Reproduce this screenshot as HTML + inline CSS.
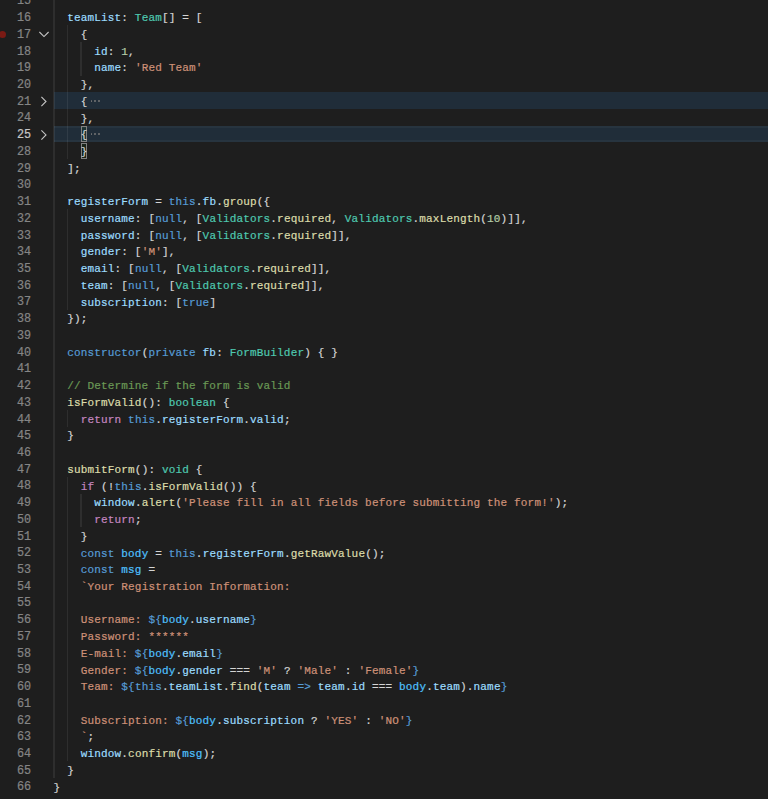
<!DOCTYPE html><html><head><meta charset="utf-8"><style>
html,body{margin:0;padding:0;}
body{width:768px;height:799px;overflow:hidden;background:#1e1e1e;position:relative;font-family:"Liberation Mono",monospace;}
.r{position:absolute;left:53.6px;height:16.725px;line-height:16.725px;white-space:pre;font-size:11px;letter-spacing:0.17px;color:#d4d4d4;-webkit-text-stroke:0.2px currentColor;}
.ln{position:absolute;left:0;width:31px;text-align:right;height:16.725px;line-height:16.725px;font-size:11.75px;letter-spacing:0.0px;color:#858585;-webkit-text-stroke:0.2px currentColor;transform:scaleY(1.08);transform-origin:50% 12.3px;}
.g{position:absolute;width:1px;background:rgba(255,255,255,0.075);}
.fold{position:absolute;left:53.5px;right:0;height:16.725px;background:#202d39;}
.v{color:#9cdcfe}.t{color:#4ec9b0}.s{color:#ce9178}.n{color:#b5cea8}.k{color:#569cd6}.c{color:#c586c0}.f{color:#dcdcaa}.m{color:#6a9955}.o{color:#4fc1ff}.p{color:#d4d4d4}
.bm{outline:1px solid #888;outline-offset:0;background:rgba(0,100,0,0.1);display:inline-block;height:16.725px;vertical-align:top;}
.ell{display:inline-block;width:10.155px;}
svg{position:absolute;}
</style></head><body>
<div class="fold" style="top:92.33px"></div>
<div class="fold" style="top:125.78px"></div>
<div style="position:absolute;left:53.5px;right:0;top:125.78px;height:12.725000000000001px;border-top:2px solid #27343f;border-bottom:2px solid #27343f;"></div>
<div class="g" style="left:53.20px;width:1.7px;top:0.00px;height:778.05px"></div>
<div class="g" style="left:66.74px;width:1.7px;top:25.43px;height:133.80px"></div>
<div class="g" style="left:66.74px;width:1.7px;top:209.40px;height:100.35px"></div>
<div class="g" style="left:66.74px;width:1.7px;top:410.10px;height:16.73px"></div>
<div class="g" style="left:66.74px;width:1.7px;top:477.00px;height:284.33px"></div>
<div class="g" style="left:80.28px;width:1.7px;top:42.15px;height:33.45px"></div>
<div class="g" style="left:80.28px;width:1.7px;top:493.73px;height:33.45px"></div>
<div style="position:absolute;box-sizing:border-box;left:80.68px;top:125.78px;width:6.77px;height:16.73px;border:1px solid #808080;background:rgba(0,100,0,0.1)"></div>
<div style="position:absolute;box-sizing:border-box;left:80.68px;top:142.50px;width:6.77px;height:16.73px;border:1px solid #808080;background:rgba(0,100,0,0.1)"></div>
<div class="ln" style="top:-6.63px;color:#858585">15</div>
<div class="r" style="top:-6.43px"></div>
<div class="ln" style="top:10.10px;color:#858585">16</div>
<div class="r" style="top:10.30px"><span class="p">  </span><span class="v">teamList</span><span class="p">: </span><span class="t">Team</span><span class="p">[] = [</span></div>
<div class="ln" style="top:26.82px;color:#858585">17</div>
<div class="r" style="top:27.03px"><span class="p">    {</span></div>
<div class="ln" style="top:43.55px;color:#858585">18</div>
<div class="r" style="top:43.75px"><span class="p">      </span><span class="v">id</span><span class="p">: </span><span class="n">1</span><span class="p">,</span></div>
<div class="ln" style="top:60.27px;color:#858585">19</div>
<div class="r" style="top:60.48px"><span class="p">      </span><span class="v">name</span><span class="p">: </span><span class="s">&#x27;Red Team&#x27;</span></div>
<div class="ln" style="top:77.00px;color:#858585">20</div>
<div class="r" style="top:77.20px"><span class="p">    },</span></div>
<div class="ln" style="top:93.73px;color:#858585">21</div>
<div class="r" style="top:93.92px"><span class="p">    {</span><span class="ell"></span></div>
<div class="ln" style="top:110.45px;color:#858585">24</div>
<div class="r" style="top:110.65px"><span class="p">    },</span></div>
<div class="ln" style="top:127.18px;color:#c6c6c6">25</div>
<div class="r" style="top:127.38px"><span class="p">    {</span><span class="ell"></span></div>
<div class="ln" style="top:143.90px;color:#858585">28</div>
<div class="r" style="top:144.10px"><span class="p">    }</span></div>
<div class="ln" style="top:160.62px;color:#858585">29</div>
<div class="r" style="top:160.82px"><span class="p">  ];</span></div>
<div class="ln" style="top:177.35px;color:#858585">30</div>
<div class="r" style="top:177.55px"></div>
<div class="ln" style="top:194.08px;color:#858585">31</div>
<div class="r" style="top:194.28px"><span class="p">  </span><span class="v">registerForm</span><span class="p"> = </span><span class="k">this</span><span class="p">.</span><span class="v">fb</span><span class="p">.</span><span class="f">group</span><span class="p">({</span></div>
<div class="ln" style="top:210.80px;color:#858585">32</div>
<div class="r" style="top:211.00px"><span class="p">    </span><span class="v">username</span><span class="p">: [</span><span class="k">null</span><span class="p">, [</span><span class="t">Validators</span><span class="p">.</span><span class="f">required</span><span class="p">, </span><span class="t">Validators</span><span class="p">.</span><span class="f">maxLength</span><span class="p">(</span><span class="n">10</span><span class="p">)]],</span></div>
<div class="ln" style="top:227.53px;color:#858585">33</div>
<div class="r" style="top:227.72px"><span class="p">    </span><span class="v">password</span><span class="p">: [</span><span class="k">null</span><span class="p">, [</span><span class="t">Validators</span><span class="p">.</span><span class="f">required</span><span class="p">]],</span></div>
<div class="ln" style="top:244.25px;color:#858585">34</div>
<div class="r" style="top:244.45px"><span class="p">    </span><span class="v">gender</span><span class="p">: [</span><span class="s">&#x27;M&#x27;</span><span class="p">],</span></div>
<div class="ln" style="top:260.98px;color:#858585">35</div>
<div class="r" style="top:261.18px"><span class="p">    </span><span class="v">email</span><span class="p">: [</span><span class="k">null</span><span class="p">, [</span><span class="t">Validators</span><span class="p">.</span><span class="f">required</span><span class="p">]],</span></div>
<div class="ln" style="top:277.70px;color:#858585">36</div>
<div class="r" style="top:277.90px"><span class="p">    </span><span class="v">team</span><span class="p">: [</span><span class="k">null</span><span class="p">, [</span><span class="t">Validators</span><span class="p">.</span><span class="f">required</span><span class="p">]],</span></div>
<div class="ln" style="top:294.43px;color:#858585">37</div>
<div class="r" style="top:294.63px"><span class="p">    </span><span class="v">subscription</span><span class="p">: [</span><span class="k">true</span><span class="p">]</span></div>
<div class="ln" style="top:311.15px;color:#858585">38</div>
<div class="r" style="top:311.35px"><span class="p">  });</span></div>
<div class="ln" style="top:327.88px;color:#858585">39</div>
<div class="r" style="top:328.08px"></div>
<div class="ln" style="top:344.60px;color:#858585">40</div>
<div class="r" style="top:344.80px"><span class="p">  </span><span class="k">constructor</span><span class="p">(</span><span class="k">private</span><span class="p"> </span><span class="v">fb</span><span class="p">: </span><span class="t">FormBuilder</span><span class="p">) { }</span></div>
<div class="ln" style="top:361.32px;color:#858585">41</div>
<div class="r" style="top:361.53px"></div>
<div class="ln" style="top:378.05px;color:#858585">42</div>
<div class="r" style="top:378.25px"><span class="p">  </span><span class="m">// Determine if the form is valid</span></div>
<div class="ln" style="top:394.77px;color:#858585">43</div>
<div class="r" style="top:394.98px"><span class="p">  </span><span class="f">isFormValid</span><span class="p">(): </span><span class="t">boolean</span><span class="p"> {</span></div>
<div class="ln" style="top:411.50px;color:#858585">44</div>
<div class="r" style="top:411.70px"><span class="p">    </span><span class="c">return</span><span class="p"> </span><span class="k">this</span><span class="p">.</span><span class="v">registerForm</span><span class="p">.</span><span class="v">valid</span><span class="p">;</span></div>
<div class="ln" style="top:428.23px;color:#858585">45</div>
<div class="r" style="top:428.43px"><span class="p">  }</span></div>
<div class="ln" style="top:444.95px;color:#858585">46</div>
<div class="r" style="top:445.15px"></div>
<div class="ln" style="top:461.68px;color:#858585">47</div>
<div class="r" style="top:461.88px"><span class="p">  </span><span class="f">submitForm</span><span class="p">(): </span><span class="t">void</span><span class="p"> {</span></div>
<div class="ln" style="top:478.40px;color:#858585">48</div>
<div class="r" style="top:478.60px"><span class="p">    </span><span class="c">if</span><span class="p"> (!</span><span class="k">this</span><span class="p">.</span><span class="f">isFormValid</span><span class="p">()) {</span></div>
<div class="ln" style="top:495.12px;color:#858585">49</div>
<div class="r" style="top:495.33px"><span class="p">      </span><span class="v">window</span><span class="p">.</span><span class="f">alert</span><span class="p">(</span><span class="s">&#x27;Please fill in all fields before submitting the form!&#x27;</span><span class="p">);</span></div>
<div class="ln" style="top:511.85px;color:#858585">50</div>
<div class="r" style="top:512.05px"><span class="p">      </span><span class="c">return</span><span class="p">;</span></div>
<div class="ln" style="top:528.58px;color:#858585">51</div>
<div class="r" style="top:528.78px"><span class="p">    }</span></div>
<div class="ln" style="top:545.30px;color:#858585">52</div>
<div class="r" style="top:545.50px"><span class="p">    </span><span class="k">const</span><span class="p"> </span><span class="o">body</span><span class="p"> = </span><span class="k">this</span><span class="p">.</span><span class="v">registerForm</span><span class="p">.</span><span class="f">getRawValue</span><span class="p">();</span></div>
<div class="ln" style="top:562.03px;color:#858585">53</div>
<div class="r" style="top:562.23px"><span class="p">    </span><span class="k">const</span><span class="p"> </span><span class="o">msg</span><span class="p"> =</span></div>
<div class="ln" style="top:578.75px;color:#858585">54</div>
<div class="r" style="top:578.95px"><span class="p">    </span><span class="s">`Your Registration Information:</span></div>
<div class="ln" style="top:595.48px;color:#858585">55</div>
<div class="r" style="top:595.68px"></div>
<div class="ln" style="top:612.20px;color:#858585">56</div>
<div class="r" style="top:612.40px"><span class="p">    </span><span class="s">Username: </span><span class="k">${</span><span class="o">body</span><span class="p">.</span><span class="v">username</span><span class="k">}</span></div>
<div class="ln" style="top:628.93px;color:#858585">57</div>
<div class="r" style="top:629.13px"><span class="p">    </span><span class="s">Password: ******</span></div>
<div class="ln" style="top:645.65px;color:#858585">58</div>
<div class="r" style="top:645.85px"><span class="p">    </span><span class="s">E-mail: </span><span class="k">${</span><span class="o">body</span><span class="p">.</span><span class="v">email</span><span class="k">}</span></div>
<div class="ln" style="top:662.38px;color:#858585">59</div>
<div class="r" style="top:662.58px"><span class="p">    </span><span class="s">Gender: </span><span class="k">${</span><span class="o">body</span><span class="p">.</span><span class="v">gender</span><span class="p"> === </span><span class="s">&#x27;M&#x27;</span><span class="p"> ? </span><span class="s">&#x27;Male&#x27;</span><span class="p"> : </span><span class="s">&#x27;Female&#x27;</span><span class="k">}</span></div>
<div class="ln" style="top:679.10px;color:#858585">60</div>
<div class="r" style="top:679.30px"><span class="p">    </span><span class="s">Team: </span><span class="k">${</span><span class="k">this</span><span class="p">.</span><span class="v">teamList</span><span class="p">.</span><span class="f">find</span><span class="p">(</span><span class="v">team</span><span class="p"> </span><span class="k">=&gt;</span><span class="p"> </span><span class="v">team</span><span class="p">.</span><span class="v">id</span><span class="p"> === </span><span class="o">body</span><span class="p">.</span><span class="v">team</span><span class="p">).</span><span class="v">name</span><span class="k">}</span></div>
<div class="ln" style="top:695.83px;color:#858585">61</div>
<div class="r" style="top:696.03px"></div>
<div class="ln" style="top:712.55px;color:#858585">62</div>
<div class="r" style="top:712.75px"><span class="p">    </span><span class="s">Subscription: </span><span class="k">${</span><span class="o">body</span><span class="p">.</span><span class="v">subscription</span><span class="p"> ? </span><span class="s">&#x27;YES&#x27;</span><span class="p"> : </span><span class="s">&#x27;NO&#x27;</span><span class="k">}</span></div>
<div class="ln" style="top:729.28px;color:#858585">63</div>
<div class="r" style="top:729.48px"><span class="p">    </span><span class="s">`</span><span class="p">;</span></div>
<div class="ln" style="top:746.00px;color:#858585">64</div>
<div class="r" style="top:746.20px"><span class="p">    </span><span class="v">window</span><span class="p">.</span><span class="f">confirm</span><span class="p">(</span><span class="o">msg</span><span class="p">);</span></div>
<div class="ln" style="top:762.73px;color:#858585">65</div>
<div class="r" style="top:762.93px"><span class="p">  }</span></div>
<div class="ln" style="top:779.45px;color:#858585">66</div>
<div class="r" style="top:779.65px"><span class="p">}</span></div>
<div style="position:absolute;left:90.60px;top:99.79px;width:1.8px;height:1.8px;background:#737373;border-radius:50%"></div>
<div style="position:absolute;left:94.20px;top:99.79px;width:1.8px;height:1.8px;background:#737373;border-radius:50%"></div>
<div style="position:absolute;left:97.80px;top:99.79px;width:1.8px;height:1.8px;background:#737373;border-radius:50%"></div>
<div style="position:absolute;left:90.60px;top:133.24px;width:1.8px;height:1.8px;background:#737373;border-radius:50%"></div>
<div style="position:absolute;left:94.20px;top:133.24px;width:1.8px;height:1.8px;background:#737373;border-radius:50%"></div>
<div style="position:absolute;left:97.80px;top:133.24px;width:1.8px;height:1.8px;background:#737373;border-radius:50%"></div>
<div style="position:absolute;left:-1.40px;top:30.89px;width:7.4px;height:7.4px;border-radius:50%;background:#7a1a14"></div>
<svg style="left:0;top:0" width="768" height="799"><path d="M39.4 31.987499999999997 L44 36.5875 L48.6 31.987499999999997" stroke="#c5c5c5" stroke-width="1.1" fill="none"/>
<path d="M41.4 96.8875 L46 101.4875 L41.4 106.08749999999999" stroke="#c5c5c5" stroke-width="1.1" fill="none"/>
<path d="M41.4 130.33750000000003 L46 134.93750000000003 L41.4 139.53750000000002" stroke="#c5c5c5" stroke-width="1.1" fill="none"/>
</svg>
</body></html>
